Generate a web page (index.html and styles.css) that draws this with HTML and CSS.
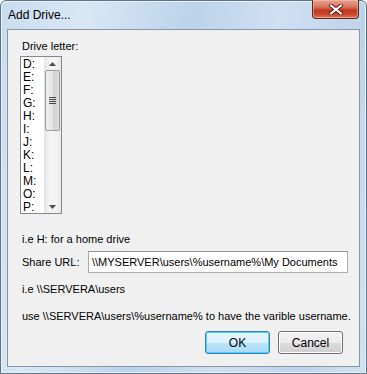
FILE: index.html
```html
<!DOCTYPE html>
<html>
<head>
<meta charset="utf-8">
<link rel="stylesheet" href="styles.css">
</head>
<body>
<div class="window">
  <div class="titlebar">
    <div class="title">Add Drive...</div>
    <div class="close">
      <svg width="14" height="11" viewBox="0 0 14 11"><path d="M2 1.5 L12 9.5 M12 1.5 L2 9.5" stroke="#6a1c14" stroke-width="4" stroke-linecap="round"/><path d="M2 1.5 L12 9.5 M12 1.5 L2 9.5" stroke="#ffffff" stroke-width="2.2" stroke-linecap="round"/></svg>
    </div>
  </div>
  <div class="client">
    <div class="line label-top">Drive letter:</div>
    <div class="listbox">
      <div class="items">
        <div>D:</div><div>E:</div><div>F:</div><div>G:</div><div>H:</div><div>I:</div>
        <div>J:</div><div>K:</div><div>L:</div><div>M:</div><div>O:</div><div>P:</div>
      </div>
      <div class="scrollbar">
        <div class="arrow up"><svg width="7" height="4" viewBox="0 0 7 4"><path d="M0 4 L3.5 0 L7 4 Z" fill="#4d4d4d"/></svg></div>
        <div class="thumb">
          <div class="grip"></div><div class="grip"></div><div class="grip"></div><div class="grip"></div>
        </div>
        <div class="track"></div>
        <div class="arrow down"><svg width="7" height="4" viewBox="0 0 7 4"><path d="M0 0 L3.5 4 L7 0 Z" fill="#4d4d4d"/></svg></div>
      </div>
    </div>
    <div class="line hint1">i.e H: for a home drive</div>
    <div class="share-row">
      <div class="share-label">Share URL:</div>
      <div class="input">\\MYSERVER\users\%username%\My Documents</div>
    </div>
    <div class="line hint2">i.e \\SERVERA\users</div>
    <div class="line hint3">use \\SERVERA\users\%username% to have the varible username.</div>
    <div class="buttons">
      <div class="btn default">OK</div>
      <div class="btn">Cancel</div>
    </div>
  </div>
</div>
</body>
</html>
```
FILE: styles.css
```css
html, body {
  margin: 0;
  padding: 0;
}
body {
  width: 367px;
  height: 374px;
  overflow: hidden;
  font-family: "Liberation Sans", Arial, sans-serif;
  font-size: 11px;
  color: #000;
}
.window {
  box-sizing: border-box;
  width: 367px;
  height: 374px;
  display: flex;
  flex-direction: column;
  padding: 0 6px 6px 6px;
  border: 1px solid #5f7387;
  border-radius: 6px 6px 0 0;
  background: linear-gradient(100deg, #c9dcef 0%, #d9e7f5 20%, #bcd3ea 45%, #cfe0f2 65%, #bfd4ea 85%, #d3e3f3 100%);
  box-shadow: inset 0 0 0 1px #e8f1fa;
}
.titlebar {
  height: 28px;
  display: flex;
  align-items: flex-start;
  flex-shrink: 0;
}
.title {
  flex: 1;
  padding: 7px 0 0 1px;
  line-height: 14px;
  font-size: 12px;
  color: #000;
}
.close {
  width: 45px;
  height: 18px;
  margin-top: -1px;
  margin-right: 1px;
  border: 1px solid #5b2a22;
  border-top: none;
  border-radius: 0 0 4px 4px;
  background: linear-gradient(#e8a493 0%, #d5735c 40%, #c2391f 55%, #c9482c 80%, #e07a5c 100%);
  display: flex;
  align-items: center;
  justify-content: center;
  box-shadow: inset 0 0 0 1px rgba(255,200,180,0.5);
}
.client {
  flex: 1;
  background: #f0f0f0;
  border: 1px solid #8795a6;
  padding: 9px 0 0 14px;
  display: flex;
  flex-direction: column;
}
.line {
  line-height: 14px;
  height: 14px;
  white-space: nowrap;
}
.listbox {
  margin-top: 3px;
  margin-left: -2px;
  width: 40px;
  height: 156px;
  border: 1px solid #828790;
  background: #fff;
  display: flex;
}
.items {
  flex: 1;
  padding: 1px 0 0 2px;
  line-height: 13px;
  font-size: 12px;
}
.scrollbar {
  width: 17px;
  display: flex;
  flex-direction: column;
  background: linear-gradient(90deg, #e3e3e3, #f3f3f3 30%, #f3f3f3 70%, #e8e8e8);
}
.arrow {
  height: 13px;
  display: flex;
  align-items: center;
  justify-content: center;
}
.thumb {
  height: 59px;
  margin: 0 1px;
  border: 1px solid #9b9b9b;
  border-radius: 2px;
  background: linear-gradient(90deg, #f1f1f1, #e4e4e4 50%, #d2d2d2 51%, #dcdcdc);
  display: flex;
  flex-direction: column;
  justify-content: center;
  align-items: center;
  gap: 1px;
}
.grip {
  width: 7px;
  height: 1px;
  background: #4a4a4a;
}
.track {
  flex: 1;
}
.hint1 {
  margin-top: 18px;
}
.share-row {
  margin-top: 5px;
  display: flex;
  align-items: center;
}
.share-label {
  width: 66px;
  line-height: 14px;
}
.input {
  box-sizing: border-box;
  width: 260px;
  height: 22px;
  border: 1px solid #abadb3;
  border-top-color: #8f9499;
  background: #fff;
  padding: 3px 0 0 3px;
  line-height: 14px;
  font-size: 11px;
  white-space: nowrap;
  overflow: hidden;
}
.hint2 {
  margin-top: 9px;
}
.hint3 {
  margin-top: 13px;
}
.buttons {
  margin-top: 8px;
  display: flex;
  gap: 8px;
  padding-left: 183px;
}
.btn {
  box-sizing: border-box;
  width: 65px;
  height: 23px;
  border: 1px solid #707070;
  border-radius: 3px;
  background: linear-gradient(#f2f2f2 0%, #ebebeb 50%, #dddddd 51%, #cfcfcf 100%);
  box-shadow: inset 0 0 0 1px #fcfcfc;
  display: flex;
  align-items: center;
  justify-content: center;
  font-size: 12px;
}
.btn.default {
  border-color: #3c7fb1;
  background: linear-gradient(#eaf6fd 0%, #d9f0fc 50%, #bee6fd 51%, #a7d9f5 100%);
  box-shadow: inset 0 0 0 1px #48d4fa;
}
```
